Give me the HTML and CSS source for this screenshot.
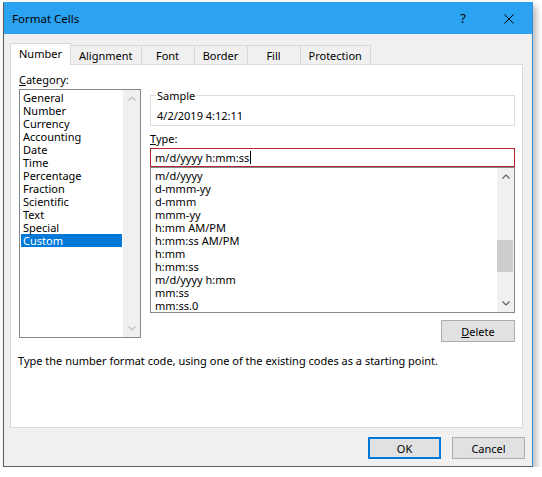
FILE: index.html
```html
<!DOCTYPE html>
<html lang="en">
<head>
  <meta charset="UTF-8">
  <meta name="viewport" content="width=device-width, initial-scale=1.0">
  <title>Format Cells</title>
  <link rel="stylesheet" href="styles.css">
</head>
<body>
  <div class="window">
    <div class="titlebar">
      <span class="title">Format Cells</span>
      <span class="title-btn help">?</span>
      <span class="title-btn close">
        <svg width="10" height="10" viewBox="0 0 10 10"><path d="M0.5 0.5 L9.5 9.5 M9.5 0.5 L0.5 9.5" stroke="#000" stroke-width="1" fill="none"/></svg>
      </span>
    </div>

    <div class="dialog-body">
      <div class="tabs">
        <div class="tab active">Number</div>
        <div class="tab">Alignment</div>
        <div class="tab">Font</div>
        <div class="tab">Border</div>
        <div class="tab">Fill</div>
        <div class="tab">Protection</div>
      </div>

      <div class="panel">
        <div class="columns">
          <!-- Categoria -->
          <div class="col-left">
            <div class="label"><u>C</u>ategory:</div>
            <div class="listbox category-list">
              <ul class="items">
                <li>General</li>
                <li>Number</li>
                <li>Currency</li>
                <li>Accounting</li>
                <li>Date</li>
                <li>Time</li>
                <li>Percentage</li>
                <li>Fraction</li>
                <li>Scientific</li>
                <li>Text</li>
                <li>Special</li>
                <li class="selected">Custom</li>
              </ul>
              <div class="scrollbar disabled">
                <div class="arrow"><svg width="8" height="5" viewBox="0 0 8 5"><polyline points="0.5,4.5 4,1 7.5,4.5"/></svg></div>
                <div class="track"></div>
                <div class="arrow"><svg width="8" height="5" viewBox="0 0 8 5"><polyline points="0.5,0.5 4,4 7.5,0.5"/></svg></div>
              </div>
            </div>
          </div>

          <!-- Tipo -->
          <div class="col-right">
            <fieldset class="sample">
              <legend>Sample</legend>
              <div class="sample-value">4/2/2019 4:12:11</div>
            </fieldset>
            <div class="label type-label"><u>T</u>ype:</div>
            <div class="type-input">m/d/yyyy h:mm:ss<span class="caret"></span></div>
            <div class="listbox format-list">
              <ul class="items">
                <li>m/d/yyyy</li>
                <li>d-mmm-yy</li>
                <li>d-mmm</li>
                <li>mmm-yy</li>
                <li>h:mm AM/PM</li>
                <li>h:mm:ss AM/PM</li>
                <li>h:mm</li>
                <li>h:mm:ss</li>
                <li>m/d/yyyy h:mm</li>
                <li>mm:ss</li>
                <li>mm:ss.0</li>
              </ul>
              <div class="scrollbar">
                <div class="arrow"><svg width="8" height="5" viewBox="0 0 8 5"><polyline points="0.5,4.5 4,1 7.5,4.5"/></svg></div>
                <div class="track"><div class="thumb"></div></div>
                <div class="arrow"><svg width="8" height="5" viewBox="0 0 8 5"><polyline points="0.5,0.5 4,4 7.5,0.5"/></svg></div>
              </div>
            </div>
            <div class="delete-row">
              <button class="btn btn-delete" type="button"><u>D</u>elete</button>
            </div>
          </div>
        </div>
        <p class="hint">Type the number format code, using one of the existing codes as a starting point.</p>
      </div>

      <div class="footer">
        <button class="btn btn-default" type="button">OK</button>
        <button class="btn" type="button">Cancel</button>
      </div>
    </div>
  </div>
</body>
</html>
```

FILE: styles.css
```css
/* Geral */
* {
  box-sizing: border-box;
}
body {
  margin: 0;
  padding: 2px 0 0 3px;
  background: #fff;
  font-family: 'Noto Sans', 'Open Sans', sans-serif;
  font-size: 11px;
  line-height: 15px;
  color: #000;
}
u {
  text-decoration: underline;
  text-underline-offset: 1px;
}

/* Janela */
.window {
  width: 530px;
  height: 465px;
  display: flex;
  flex-direction: column;
  background: #f0f0f0;
  border: 1px solid #2ba3f0;
  border-left-color: #5f5f5f;
  border-bottom-color: #5f5f5f;
  border-right-color: #3a8fd6;
  box-shadow: 3px 4px 7px rgba(0, 0, 0, 0.3);
}
.titlebar {
  height: 31px;
  display: flex;
  align-items: center;
  background: #2ba3f0;
  padding-left: 8px;
}
.title {
  font-size: 11.5px;
}
.title-btn {
  width: 46px;
  height: 31px;
  display: flex;
  align-items: center;
  justify-content: center;
}
.help {
  margin-left: auto;
  font-size: 13px;
}

.dialog-body {
  flex: 1;
  display: flex;
  flex-direction: column;
  padding: 9px 8px 0 6px;
}

/* Abas */
.tabs {
  display: flex;
  align-items: flex-end;
  height: 21px;
  position: relative;
  z-index: 1;
}
.tab {
  height: 19px;
  min-width: 54px;
  padding: 1px 8px 0;
  line-height: 17px;
  text-align: center;
  background: #f0f0f0;
  border: 1px solid #d9d9d9;
  border-bottom: none;
  margin-left: -1px;
}
.tab:first-child {
  margin-left: 0;
}
.tab.active {
  height: 22px;
  margin-bottom: -1px;
  padding-top: 0;
  line-height: 19px;
  background: #fff;
}

/* Painel */
.panel {
  width: 513px;
  height: 364px;
  background: #fff;
  border: 1px solid #d9d9d9;
  padding: 7px 7px 0 8px;
}
.columns {
  display: grid;
  grid-template-columns: 122px 365px;
  column-gap: 9px;
}
.label {
  line-height: 15px;
}

.listbox {
  display: flex;
  background: #fff;
  border: 1px solid #828790;
}
.items {
  flex: 1;
  list-style: none;
  margin: 0;
  padding: 1px;
}
.items li {
  line-height: 13px;
  height: 13px;
  padding-left: 2px;
  white-space: nowrap;
}
.items li.selected {
  background: #0078d7;
  color: #fff;
}
.category-list {
  margin-top: 2px;
  height: 249px;
}
.format-list {
  height: 146px;
}
.format-list .items li {
  padding-left: 3px;
}

.scrollbar {
  width: 17px;
  display: flex;
  flex-direction: column;
  background: #f0f0f0;
}
.arrow {
  height: 17px;
  display: flex;
  align-items: center;
  justify-content: center;
}
.arrow polyline {
  fill: none;
  stroke: #606060;
  stroke-width: 1.2;
}
.scrollbar.disabled .arrow polyline {
  stroke: #bfbfbf;
}
.track {
  flex: 1;
}
.thumb {
  height: 32px;
  margin: 55px 1px 0 0;
  background: #cdcdcd;
}

/* Amostra */
.sample {
  margin: 16px 0 0;
  padding: 5px 0 2px 5px;
  border: 1px solid #dcdcdc;
  min-width: 0;
}
.sample legend {
  padding: 0 1px;
  line-height: 15px;
}
.sample-value {
  padding-left: 1px;
}
.type-label {
  margin-top: 5px;
}
.type-input {
  margin-top: 2px;
  height: 19px;
  padding-left: 4px;
  line-height: 17px;
  border: 1px solid #b0262c;
  background: #fff;
}
.caret {
  display: inline-block;
  width: 1px;
  height: 13px;
  margin-left: 1px;
  background: #000;
  vertical-align: -2px;
}

.delete-row {
  display: flex;
  justify-content: flex-end;
  margin-top: 7px;
}

/* Botoes */
.btn {
  height: 22px;
  width: 73px;
  padding: 0;
  font-family: inherit;
  font-size: 11px;
  color: #000;
  background: #e1e1e1;
  border: 1px solid #adadad;
}
.btn-delete {
  width: 74px;
}
.btn-default {
  border: 2px solid #0078d7;
}

.hint {
  margin: 11px 0 0 -1px;
}

.footer {
  display: flex;
  justify-content: flex-end;
  gap: 11px;
  margin: 9px -1px 0 0;
}
```
